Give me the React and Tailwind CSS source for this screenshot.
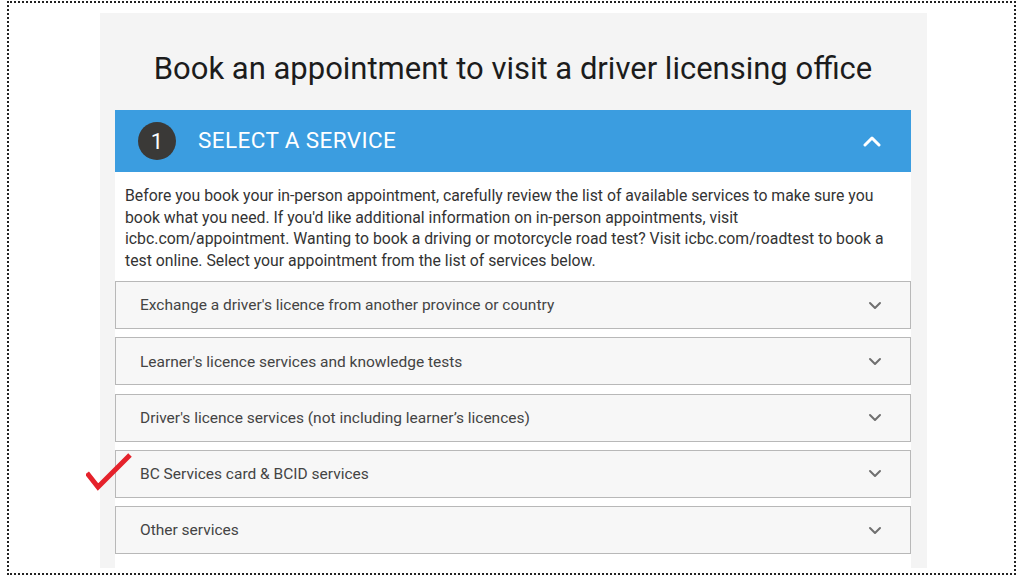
import React from "react";

const items = [
  "Exchange a driver's licence from another province or country",
  "Learner's licence services and knowledge tests",
  "Driver's licence services (not including learner\u2019s licences)",
  "BC Services card & BCID services",
  "Other services",
];

function ChevronDown() {
  return (
    <svg width="14" height="9" viewBox="0 0 14 9" fill="none">
      <path d="M2 2l5 5 5-5" stroke="#707070" strokeWidth="2" strokeLinecap="round" strokeLinejoin="round" />
    </svg>
  );
}

export default function App() {
  return (
    <div className="w-[1024px] h-[576px] bg-white overflow-hidden" style={{ fontFamily: "Roboto, 'Noto Sans', sans-serif" }}>
      <div className="ml-[7px] mt-[1px] w-[1009px] h-[574px] border-2 border-dotted border-[#222] relative">
        <div className="ml-[91px] mt-[10px] w-[827px] h-[555px] bg-[#f4f4f4] px-[15px] pr-[16px] flex flex-col">
          <h1 className="h-[97px] flex items-center justify-center pt-[16px] text-[31px] text-[#1c1c1c] font-normal">
            Book an appointment to visit a driver licensing office
          </h1>
          <div className="h-[62px] bg-[#3b9de0] flex items-center pl-[23px] pr-[30px]">
            <div className="w-[38px] h-[38px] rounded-full bg-[#3a3937] flex items-center justify-center text-white text-[22px]">1</div>
            <div className="ml-[22px] text-white text-[22.5px] tracking-[0.4px] flex-1">SELECT A SERVICE</div>
            <svg width="18" height="12" viewBox="0 0 18 12" fill="none">
              <path d="M2 10l7-7 7 7" stroke="white" strokeWidth="3" strokeLinecap="round" strokeLinejoin="round" />
            </svg>
          </div>
          <div className="flex-1 bg-white">
            <p className="px-[10px] pt-[13px] pb-[10px] text-[15.8px] leading-[21.5px] text-[#333]">
              Before you book your in-person appointment, carefully review the list of available services to make sure you book what you need. If you'd like additional information on in-person appointments, visit icbc.com/appointment. Wanting to book a driving or motorcycle road test? Visit icbc.com/roadtest to book a test online. Select your appointment from the list of services below.
            </p>
            <div className="flex flex-col gap-[8.25px]">
              {items.map((t) => (
                <div key={t} className="h-[48px] border border-[#b8b8b8] bg-[#f7f7f7] flex items-center pl-[24px] pr-[28px]">
                  <span className="flex-1 pt-[2px] text-[15.5px] text-[#444]">{t}</span>
                  <ChevronDown />
                </div>
              ))}
            </div>
          </div>
        </div>
        <svg className="absolute left-[77px] top-[450px]" width="48" height="40" viewBox="0 0 48 40" fill="none">
          <path d="M1 20l11 14L44 2" stroke="#e5222b" strokeWidth="5" strokeLinecap="butt" strokeLinejoin="miter" />
        </svg>
      </div>
    </div>
  );
}
